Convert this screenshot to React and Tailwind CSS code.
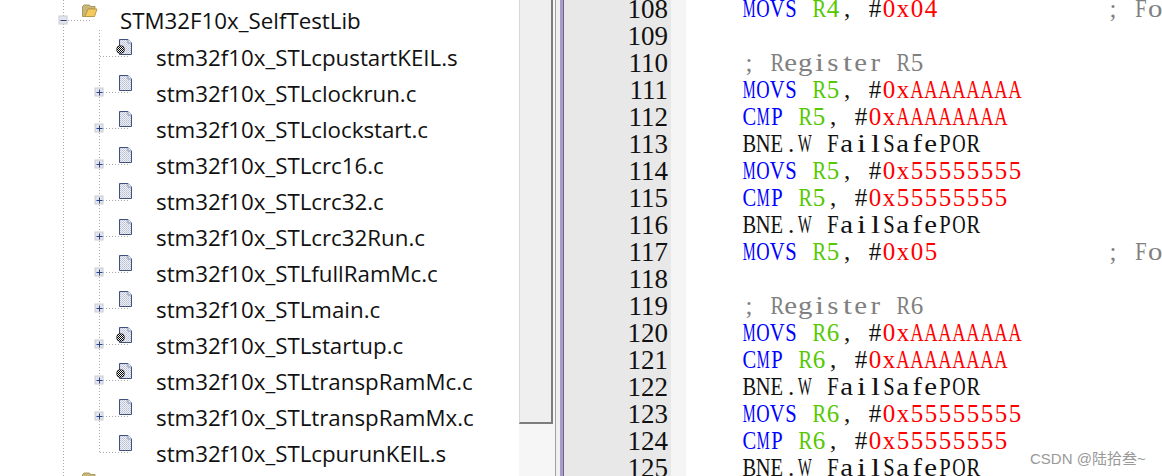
import React from "react";

const files = [
  { name: "stm32f10x_STLcpustartKEIL.s", asm: true },
  { name: "stm32f10x_STLclockrun.c", plus: true },
  { name: "stm32f10x_STLclockstart.c", plus: true },
  { name: "stm32f10x_STLcrc16.c", plus: true },
  { name: "stm32f10x_STLcrc32.c", plus: true },
  { name: "stm32f10x_STLcrc32Run.c", plus: true },
  { name: "stm32f10x_STLfullRamMc.c", plus: true },
  { name: "stm32f10x_STLmain.c", plus: true },
  { name: "stm32f10x_STLstartup.c", plus: true, asm: true },
  { name: "stm32f10x_STLtranspRamMc.c", plus: true, asm: true },
  { name: "stm32f10x_STLtranspRamMx.c", plus: true },
  { name: "stm32f10x_STLcpurunKEIL.s", last: true },
];

const BLUE = "text-[#0000ff]";
const GREEN = "text-[#55c800]";
const RED = "text-[#ff0000]";
const BLACK = "text-[#111111]";
const GRAY = "text-[#808080]";

const mov = (op, reg, val) => [[op, BLUE], [" ", BLACK], [reg, GREEN], [", #", BLACK], [val, RED]];
const bne = [["BNE.W FailSafePOR", BLACK]];

const code = [
  [108, [...mov("MOVS", "R4", "0x04"), ["            ; Fo", GRAY]]],
  [109, []],
  [110, [["; Register R5", GRAY]]],
  [111, mov("MOVS", "R5", "0xAAAAAAAA")],
  [112, mov("CMP", "R5", "0xAAAAAAAA")],
  [113, bne],
  [114, mov("MOVS", "R5", "0x55555555")],
  [115, mov("CMP", "R5", "0x55555555")],
  [116, bne],
  [117, [...mov("MOVS", "R5", "0x05"), ["            ; Fo", GRAY]]],
  [118, []],
  [119, [["; Register R6", GRAY]]],
  [120, mov("MOVS", "R6", "0xAAAAAAAA")],
  [121, mov("CMP", "R6", "0xAAAAAAAA")],
  [122, bne],
  [123, mov("MOVS", "R6", "0x55555555")],
  [124, mov("CMP", "R6", "0x55555555")],
  [125, bne],
];

// SimSun style cells: squeeze wide capitals, stretch thin lowercase
function glyphClass(c) {
  if (c === "M" || c === "W") return "scale-x-[0.58]";
  if (c === "A" || c === "O") return "scale-x-[0.74]";
  if ("BCEFNPRSUV".includes(c)) return "scale-x-[0.82]";
  if ("ilt".includes(c)) return "scale-x-[1.3]";
  if ("aefgors".includes(c)) return "scale-x-[1.15]";
  return "";
}

function Expander({ y, x, minus }) {
  return (
    <g>
      <rect x={x - 4} y={y - 4} width="8" height="8" fill="#e4e6ec" stroke="#c9ccd4" />
      <path d={minus ? `M${x - 2.5} ${y + 0.5}h6` : `M${x - 2.5} ${y + 0.5}h6M${x + 0.5} ${y - 2.5}v6`} stroke="#2b3f8c" strokeWidth="1" />
    </g>
  );
}

function FileIcon({ asm }) {
  return (
    <g>
      <path d="M119.5 -0.5H128L131.5 3V14.5H119.5Z" fill="url(#dots)" stroke="#3f4f7e" />
      <path d="M128 -0.5V3H131.5" fill="#fff" stroke="#7f8db0" />
      {asm && <circle cx="120.5" cy="9.5" r="4" fill="url(#check)" stroke="#111" strokeWidth="0.5" />}
    </g>
  );
}

function Folder({ y }) {
  return (
    <g transform={`translate(0 ${y})`}>
      <path d="M82.5 16.5V6.5L84 5H89L91 6.5H95V9H88L85 16.5Z" fill="#c9b77a" stroke="#a8995f" />
      <path d="M85 16.5L88 9H97L94.5 16.5Z" fill="#f5c95a" stroke="#b79a4a" />
    </g>
  );
}

function Defs() {
  return (
    <defs>
      <pattern id="dots" width="2" height="2" patternUnits="userSpaceOnUse">
        <rect width="2" height="2" fill="#eef0f6" />
        <rect width="1" height="1" fill="#b9bfce" />
        <rect x="1" y="1" width="1" height="1" fill="#c9cedb" />
      </pattern>
      <pattern id="check" width="2" height="2" patternUnits="userSpaceOnUse">
        <rect width="2" height="2" fill="#fff" />
        <rect width="1" height="1" fill="#000" />
        <rect x="1" y="1" width="1" height="1" fill="#000" />
      </pattern>
    </defs>
  );
}

function TitleRow() {
  return (
    <div className="flex h-[40px] items-start">
      <svg width="120" height="40" className="shrink-0">
        <Defs />
        <path d="M63.5 0V40" stroke="#a8a8a8" strokeDasharray="1 2" />
        <path d="M68 20.5H92" stroke="#a8a8a8" strokeDasharray="1 2" />
        <path d="M99.5 30V40" stroke="#a8a8a8" strokeDasharray="1 2" />
        <Expander x={63} y={20} minus />
        <Folder y={0} />
      </svg>
      <span className="mt-[3px] text-[22.3px] leading-[36px] text-[#111]">STM32F10x_SelfTestLib</span>
    </div>
  );
}

function FileRow({ file }) {
  return (
    <div className="flex h-[36px] items-center">
      <svg width="156" height="36" className="shrink-0" overflow="visible">
        <path d="M63.5 0V36" stroke="#a8a8a8" strokeDasharray="1 2" />
        <path d={file.last ? "M99.5 0V16" : "M99.5 0V36"} stroke="#a8a8a8" strokeDasharray="1 2" />
        <path d="M100 16.5H128" stroke="#a8a8a8" strokeDasharray="1 2" />
        {file.plus && <Expander x={99} y={16} />}
        <FileIcon asm={file.asm} />
      </svg>
      <span className="pb-[2px] text-[22.3px] leading-[33px] text-[#111] whitespace-nowrap">{file.name}</span>
    </div>
  );
}

function Tree() {
  return (
    <div className="w-[519px] shrink-0 bg-white font-['Open_Sans',sans-serif]">
      <TitleRow />
      {files.map((f) => (
        <FileRow key={f.name} file={f} />
      ))}
      <svg width="120" height="12" className="block">
        <path d="M63.5 0V12" stroke="#a8a8a8" strokeDasharray="1 2" />
        <Folder y={-4} />
      </svg>
    </div>
  );
}

function Scrollbar() {
  return (
    <div className="w-[37px] shrink-0 h-full bg-[#f6f6f6] border-r border-[#a0a0a0]">
      <div className="h-[424px] w-[34px] bg-[#efefef] border-l border-[#d8d8d8] border-r-2 border-b-2 border-r-[#7d7d7d] border-b-[#7d7d7d]" />
    </div>
  );
}

function CodeLine({ tokens }) {
  return (
    <div className="flex h-[27px] items-center">
      {tokens.flatMap(([text, color], i) =>
        text.split("").map((c, j) => (
          <span key={`${i}-${j}`} className={`inline-flex w-[14px] justify-center ${color}`}>
            <span className={`inline-block ${glyphClass(c)}`}>{c === " " ? "\u00a0" : c}</span>
          </span>
        ))
      )}
    </div>
  );
}

export default function App() {
  return (
    <div className="relative flex h-[476px] w-[1162px] overflow-hidden bg-white">
      <Tree />
      <Scrollbar />
      <div className="w-[4px] shrink-0 bg-[#f0f0f0]" />
      <div className="w-[3px] shrink-0 bg-[#a79bd2]" />
      <div className="w-[1px] shrink-0 bg-[#6a6a6a]" />
      <div className="w-[107px] shrink-0 bg-[#e8e8e8] pr-[3px] pt-[1px] text-right font-['Liberation_Serif',serif] text-[27px] leading-[27px] text-[#111] -mt-[5px]">
        {code.map(([n]) => (
          <div key={n} className="h-[27px]">{n}</div>
        ))}
      </div>
      <div className="w-[15px] shrink-0 bg-[#f5f5f5]" />
      <div className="flex-1 pl-[56px] -mt-[5px] font-['Liberation_Serif',serif] text-[25px] leading-[27px] whitespace-pre">
        {code.map(([n, tokens]) => (
          <CodeLine key={n} tokens={tokens} />
        ))}
      </div>
      <div className="absolute left-[1030px] top-[450px] font-['Liberation_Sans','Noto_Sans_CJK_SC',sans-serif] text-[15px] leading-[18px] text-[#999999] whitespace-nowrap">
        CSDN @陆拾叁~
      </div>
    </div>
  );
}
